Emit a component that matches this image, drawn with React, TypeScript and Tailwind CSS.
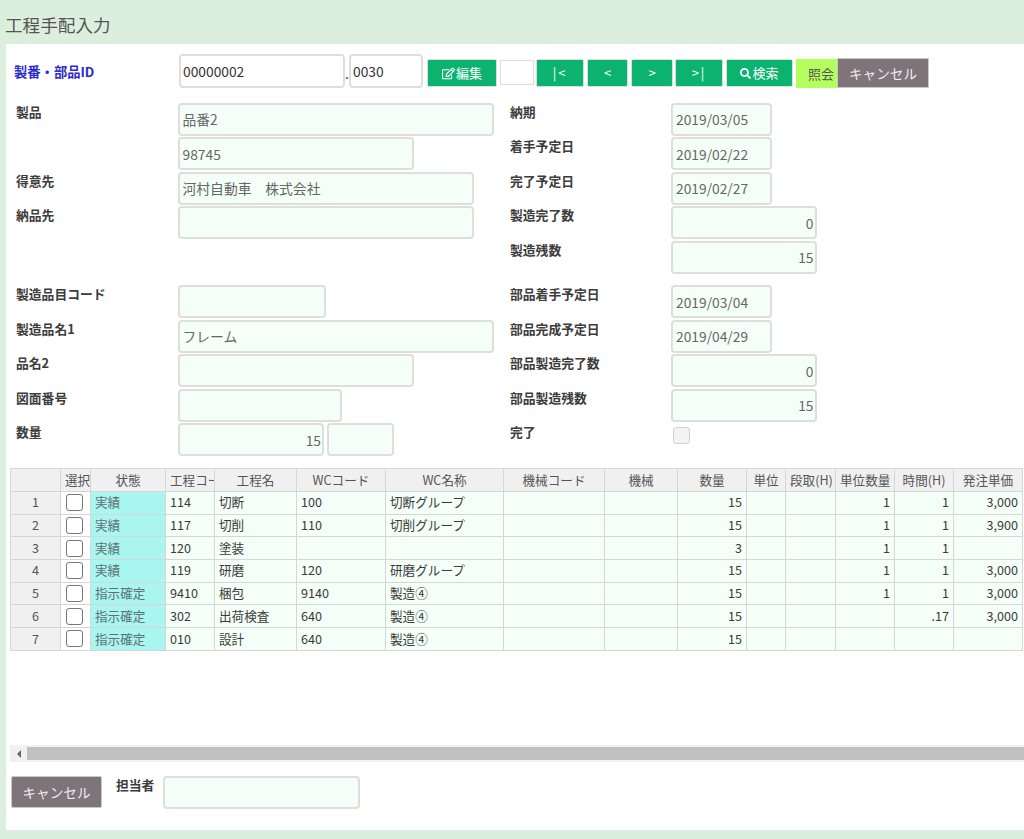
import { FaRegEdit, FaSearch } from "react-icons/fa";

const columns = [
  { label: "", w: "w-[50px]" },
  { label: "選択", w: "w-[30px]" },
  { label: "状態", w: "w-[75px]" },
  { label: "工程コード", w: "w-[49px]" },
  { label: "工程名", w: "w-[82px]" },
  { label: "WCコード", w: "w-[89px]" },
  { label: "WC名称", w: "w-[118px]" },
  { label: "機械コード", w: "w-[101px]" },
  { label: "機械", w: "w-[73px]" },
  { label: "数量", w: "w-[69px]" },
  { label: "単位", w: "w-[39px]" },
  { label: "段取(H)", w: "w-[50px]" },
  { label: "単位数量", w: "w-[59px]" },
  { label: "時間(H)", w: "w-[59px]" },
  { label: "発注単価", w: "w-[69px]" },
];

const rows = [
  ["実績", "114", "切断", "100", "切断グループ", "15", "1", "1", "3,000"],
  ["実績", "117", "切削", "110", "切削グループ", "15", "1", "1", "3,900"],
  ["実績", "120", "塗装", "", "", "3", "1", "1", ""],
  ["実績", "119", "研磨", "120", "研磨グループ", "15", "1", "1", "3,000"],
  ["指示確定", "9410", "梱包", "9140", "製造④", "15", "1", "1", "3,000"],
  ["指示確定", "302", "出荷検査", "640", "製造④", "15", "", ".17", "3,000"],
  ["指示確定", "010", "設計", "640", "製造④", "15", "", "", ""],
];

function Field({
  value = "",
  width,
  right,
}: {
  value?: string;
  width: string;
  right?: boolean;
}) {
  return (
    <input
      readOnly
      value={value}
      className={`${width} h-[33px] rounded-[4px] border-2 border-[#dedede] bg-[#f4fff8] pl-[3px] pr-[1px] text-[13.8px] text-[#666] outline-none ${
        right ? "text-right" : ""
      }`}
    />
  );
}

function Row({
  label,
  labelWidth,
  children,
}: {
  label?: string;
  labelWidth: string;
  children?: React.ReactNode;
}) {
  return (
    <div className="flex h-[34.5px]">
      <div className={`${labelWidth} text-[12.8px] font-bold leading-[18px] text-[#3c3c3c]`}>
        {label}
      </div>
      {children}
    </div>
  );
}

function Td({
  children,
  className = "",
}: {
  children?: React.ReactNode;
  className?: string;
}) {
  return (
    <td className={`overflow-hidden whitespace-nowrap border border-[#d6d6d6] px-[4px] py-0 ${className}`}>
      {children}
    </td>
  );
}

const left = "w-[161.5px]";
const right = "w-[161px]";
const green =
  "flex h-[28px] items-center justify-center rounded-[2px] border border-[#dcdcdc] bg-[#0cb36f] text-[13px] text-white";

export default function App() {
  return (
    <div className="h-[839px] w-[1024px] overflow-hidden bg-[#dcefdc] font-['Noto_Sans_CJK_JP','Noto_Sans',sans-serif]">
      <div className="flex h-[44px] items-center pl-[5px] pt-[7px] text-[17.6px] text-[#555]">
        工程手配入力
      </div>

      <div className="ml-[6px] h-[786px] bg-white pt-[10px]">
        {/* header row */}
        <div className="ml-[8px] flex h-[34px] items-start">
          <div className="w-[166px] pt-[8px] text-[13.3px] font-bold leading-[20px] text-[#2a2ad0]">
            製番・部品ID
          </div>
          <input
            readOnly
            value="00000002"
            className="-ml-[1px] h-[34px] w-[166px] rounded-[4px] border-2 border-[#dedede] bg-white pl-[2px] text-[13.8px] text-[#333] outline-none"
          />
          <span className="flex h-[34px] w-[4px] items-center pt-[4px] text-[14px] text-[#555]">.</span>
          <input
            readOnly
            value="0030"
            className="h-[34px] w-[74px] rounded-[4px] border-2 border-[#dedede] bg-white pl-[2px] text-[13.8px] text-[#333] outline-none"
          />
          <button className={`${green} ml-[4px] mt-[5px] w-[70px] gap-[1px]`}>
            <FaRegEdit className="h-[13px] w-[13px]" />
            編集
          </button>
          <div className="ml-[3px] mt-[6px] h-[25px] w-[34px] border border-[#dcdcdc] bg-white" />
          <button className={`${green} ml-[2px] mt-[5px] w-[48px] tracking-[2px]`}>|&lt;</button>
          <button className={`${green} ml-[3px] mt-[5px] w-[41px]`}>&lt;</button>
          <button className={`${green} ml-[3px] mt-[5px] w-[42px]`}>&gt;</button>
          <button className={`${green} ml-[2px] mt-[5px] w-[48px] tracking-[2px]`}>&gt;|</button>
          <button className={`${green} ml-[3px] mt-[5px] w-[67px] gap-[1px]`}>
            <FaSearch className="h-[11px] w-[11px]" />
            検索
          </button>
          <div className="ml-[3px] mt-[5px] flex h-[29px] w-[41px] items-center justify-end bg-[#b4ff5f] pr-[3px] text-[13px] text-[#555]">
            照会
          </div>
          <button className="mt-[4px] h-[30px] w-[92px] border border-[#c8c8c8] bg-[#7e747a] text-[13.6px] text-[#eee]">
            キャンセル
          </button>
        </div>

        {/* form */}
        <div className="ml-[10px] mt-[14.5px] flex">
          <div className="w-[494px]">
            <Row label="製品" labelWidth={left}>
              <Field value="品番2" width="w-[316px]" />
            </Row>
            <Row labelWidth={left}>
              <Field value="98745" width="w-[236.5px]" />
            </Row>
            <Row label="得意先" labelWidth={left}>
              <Field value="河村自動車　株式会社" width="w-[296px]" />
            </Row>
            <Row label="納品先" labelWidth={left}>
              <Field width="w-[296px]" />
            </Row>
            <div className="h-[44.5px]" />
            <Row label="製造品目コード" labelWidth={left}>
              <Field width="w-[148px]" />
            </Row>
            <Row label="製造品名1" labelWidth={left}>
              <Field value="フレーム" width="w-[316px]" />
            </Row>
            <Row label="品名2" labelWidth={left}>
              <Field width="w-[236.5px]" />
            </Row>
            <Row label="図面番号" labelWidth={left}>
              <Field width="w-[164px]" />
            </Row>
            <Row label="数量" labelWidth={left}>
              <Field value="15" right width="w-[146.5px]" />
              <Field width="ml-[3px] w-[67px]" />
            </Row>
          </div>
          <div>
            <Row label="納期" labelWidth={right}>
              <Field value="2019/03/05" width="w-[100.5px]" />
            </Row>
            <Row label="着手予定日" labelWidth={right}>
              <Field value="2019/02/22" width="w-[100.5px]" />
            </Row>
            <Row label="完了予定日" labelWidth={right}>
              <Field value="2019/02/27" width="w-[100.5px]" />
            </Row>
            <Row label="製造完了数" labelWidth={right}>
              <Field value="0" right width="w-[145.5px]" />
            </Row>
            <Row label="製造残数" labelWidth={right}>
              <Field value="15" right width="w-[145.5px]" />
            </Row>
            <div className="h-[10px]" />
            <Row label="部品着手予定日" labelWidth={right}>
              <Field value="2019/03/04" width="w-[100.5px]" />
            </Row>
            <Row label="部品完成予定日" labelWidth={right}>
              <Field value="2019/04/29" width="w-[100.5px]" />
            </Row>
            <Row label="部品製造完了数" labelWidth={right}>
              <Field value="0" right width="w-[145.5px]" />
            </Row>
            <Row label="部品製造残数" labelWidth={right}>
              <Field value="15" right width="w-[145.5px]" />
            </Row>
            <Row label="完了" labelWidth={right}>
              <input
                type="checkbox"
                disabled
                className="ml-[2px] mt-[4px] h-[17px] w-[17px] appearance-none rounded-[3px] border border-[#d0d0d0] bg-[#f3f3f3]"
              />
            </Row>
          </div>
        </div>

        {/* grid */}
        <div className="ml-[4px] mt-[10.5px] h-[277px] overflow-hidden">
          <table className="w-[1013px] table-fixed border-collapse text-[12.6px] text-[#3a3a3a]">
            <colgroup>
              {columns.map((c, i) => (
                <col key={i} className={c.w} />
              ))}
            </colgroup>
            <thead>
              <tr className="h-[23px]">
                {columns.map((c, i) => (
                  <th
                    key={i}
                    className="overflow-hidden whitespace-nowrap border border-[#d6d6d6] bg-[#f0f0f0] px-[4px] py-0 text-center font-normal text-[#555]"
                  >
                    {c.label}
                  </th>
                ))}
              </tr>
            </thead>
            <tbody>
              {rows.map((r, i) => (
                <tr key={i} className="h-[22.7px]">
                  <Td className="bg-[#f0f0f0] text-center text-[#555]">{i + 1}</Td>
                  <td className="border border-[#d6d6d6] bg-white p-0">
                    <input
                      type="checkbox"
                      className="ml-[5px] block h-[17px] w-[17px] appearance-none rounded-[3px] border border-[#777] bg-white"
                    />
                  </td>
                  <Td className="bg-[#a9f6f1] text-[#607072]">{r[0]}</Td>
                  <Td className="bg-[#f4fff8]">{r[1]}</Td>
                  <Td className="bg-[#f4fff8]">{r[2]}</Td>
                  <Td className="bg-[#f4fff8]">{r[3]}</Td>
                  <Td className="bg-[#f4fff8]">{r[4]}</Td>
                  <Td className="bg-[#f4fff8]" />
                  <Td className="bg-[#f4fff8]" />
                  <Td className="bg-[#f4fff8] text-right">{r[5]}</Td>
                  <Td className="bg-[#f4fff8]" />
                  <Td className="bg-[#f4fff8]" />
                  <Td className="bg-[#f4fff8] text-right">{r[6]}</Td>
                  <Td className="bg-[#f4fff8] text-right">{r[7]}</Td>
                  <Td className="bg-[#f4fff8] text-right">{r[8]}</Td>
                </tr>
              ))}
            </tbody>
          </table>
        </div>

        {/* scrollbar */}
        <div className="ml-[4px] flex h-[17px] items-center bg-[#f1f1f1]">
          <div className="flex w-[17px] justify-center">
            <div className="h-0 w-0 border-y-[4px] border-r-[4px] border-y-transparent border-r-[#666]" />
          </div>
          <div className="h-[13px] flex-1 bg-[#c1c1c1]" />
        </div>

        {/* footer */}
        <div className="ml-[5px] mt-[14px] flex items-start">
          <button className="h-[32px] w-[91px] rounded-[2px] border border-[#c8c8c8] bg-[#7e747a] text-[13.6px] text-[#eee]">
            キャンセル
          </button>
          <div className="ml-[14px] w-[47px] text-[12.8px] font-bold leading-[18px] text-[#3c3c3c]">
            担当者
          </div>
          <Field width="w-[197px]" />
        </div>
      </div>
    </div>
  );
}
